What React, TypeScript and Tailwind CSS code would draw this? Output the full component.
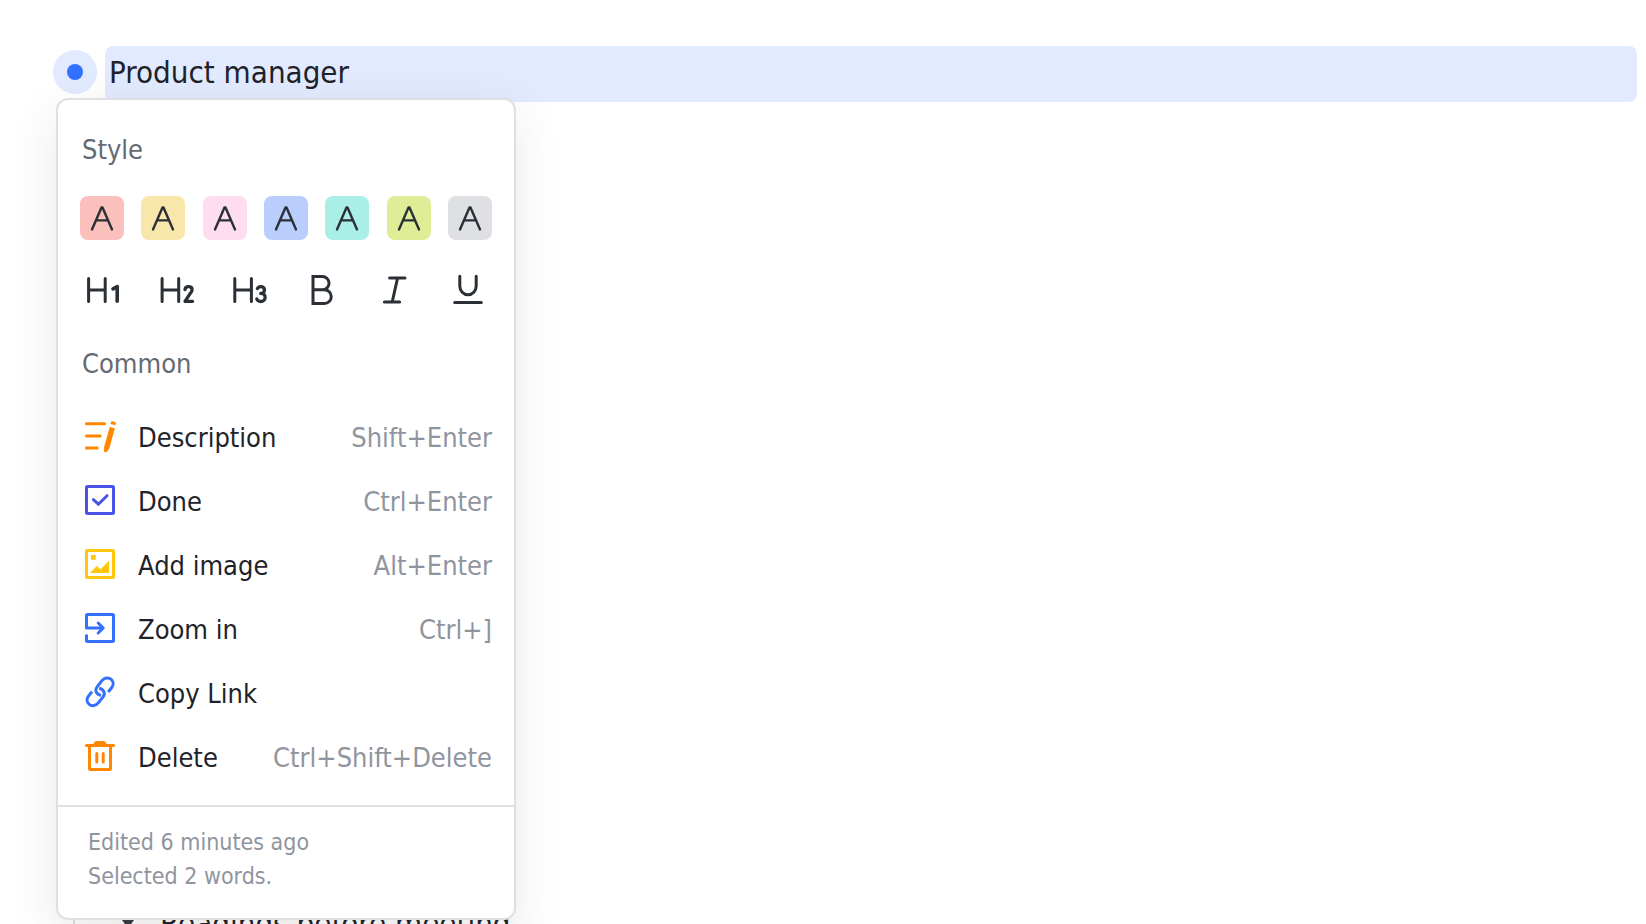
import React from 'react';

const swatches = [
  { name: 'Red', bg: 'bg-[#fbbfbc]' },
  { name: 'Yellow', bg: 'bg-[#f8e6ab]' },
  { name: 'Pink', bg: 'bg-[#fdddef]' },
  { name: 'Blue', bg: 'bg-[#bacefd]' },
  { name: 'Teal', bg: 'bg-[#a9efe6]' },
  { name: 'Green', bg: 'bg-[#dfee96]' },
  { name: 'Gray', bg: 'bg-[#dee0e3]' },
];

const formats = [
  {
    name: 'Heading 1',
    icon: (
      <>
        <path d="M8.6 10.4v23.2M25.2 10.4v23.2M8.6 22h16.6" />
        <path d="M33 20.9l4.2-2.2v14.6" strokeWidth="3.6" />
      </>
    ),
  },
  {
    name: 'Heading 2',
    icon: (
      <>
        <path d="M8.1 10.4v23.2M24.7 10.4v23.2M8.1 22h16.6" />
        <path d="M31 21.5c.3-1.9 1.7-2.8 3.5-2.8 2.1 0 3.6 1.2 3.6 3 0 1.4-.8 2.6-2 3.9L31 33.3h7.6" strokeWidth="3.3" />
      </>
    ),
  },
  {
    name: 'Heading 3',
    icon: (
      <>
        <path d="M7.8 10.4v23.2M24.4 10.4v23.2M7.8 22h16.6" />
        <path
          d="M30.4 20.6c.6-1.3 1.8-2 3.5-2 2 0 3.6 1.3 3.6 3.3s-1.6 3.5-3.8 3.5c2.6 0 4.4 1.5 4.4 4s-1.9 4.1-4.3 4.1c-2 0-3.5-.9-4-2.6"
          strokeWidth="3.3"
        />
      </>
    ),
  },
  {
    name: 'Bold',
    icon: <path d="M12 8.5h9.4a6.6 6.6 0 0 1 0 13.3H12zM12 21.8h11.4a6.8 6.8 0 0 1 0 13.7H12z" strokeLinejoin="miter" />,
  },
  { name: 'Italic', icon: <path d="M15.6 10h15.4M10.4 34h15.2M23.6 10l-5.4 24" /> },
  { name: 'Underline', icon: <path d="M11.8 8.3v9.7a8.2 8.8 0 0 0 16.4 0V8.3M6.7 34.6h26.6" /> },
];

const actions = [
  {
    label: 'Description',
    shortcut: 'Shift+Enter',
    color: 'text-[#ff8800]',
    icon: (
      <>
        <path d="M2.4 3.8h18.2M2.4 16h13.8M2.4 28h10.8" />
        <path
          d="M25.8 7l5 1.3-5.3 19.6-2.6 4c-.8.9-2.6.5-2.9-.7l.2-4.7zM28.2 1.2l2.9.7c.7.2 1 .8.8 1.4l-.5 2-4.9-1.2.5-2.1c.2-.6.7-.9 1.2-.8z"
          fill="currentColor"
          stroke="none"
        />
      </>
    ),
  },
  {
    label: 'Done',
    shortcut: 'Ctrl+Enter',
    color: 'text-[#4954e6]',
    icon: (
      <>
        <rect x="2.5" y="2.5" width="27" height="27" rx="1" />
        <path d="M9.4 15.6l5 4.6 8.6-8.5" strokeLinejoin="miter" />
      </>
    ),
  },
  {
    label: 'Add image',
    shortcut: 'Alt+Enter',
    color: 'text-[#ffc60a]',
    icon: (
      <>
        <rect x="2.5" y="2.5" width="27" height="27" rx="1" />
        <path d="M7 7h4.7v4.7H7zM6 25l6.8-7 3.8 3.3 8.4-8.5V25z" fill="currentColor" stroke="none" />
      </>
    ),
  },
  {
    label: 'Zoom in',
    shortcut: 'Ctrl+]',
    color: 'text-[#3370ff]',
    icon: (
      <>
        <path
          d="M2.5 16V3.5a1 1 0 0 1 1-1h25a1 1 0 0 1 1 1v25a1 1 0 0 1-1 1h-25a1 1 0 0 1-1-1v-6"
          strokeLinecap="butt"
        />
        <path d="M2.5 16h16M14.2 11l5 5-5 5" />
      </>
    ),
  },
  {
    label: 'Copy Link',
    color: 'text-[#3370ff]',
    icon: (
      <g strokeLinecap="butt">
        <path d="M17 19.4C12.4 18.4 10.4 14.4 13.1 10.8L17.7 4.9C20.2 1.7 24.3 1 27 3.2S29.8 9 27.4 12l-3.2 4" />
        <path
          d="M17 19.4C12.4 18.4 10.4 14.4 13.1 10.8L17.7 4.9C20.2 1.7 24.3 1 27 3.2S29.8 9 27.4 12l-3.2 4"
          transform="rotate(180 16.1 15.8)"
        />
      </g>
    ),
  },
  {
    label: 'Delete',
    shortcut: 'Ctrl+Shift+Delete',
    color: 'text-[#ff8800]',
    icon: (
      <>
        <path d="M2.4 5.4h27.2M5.5 5.4v23.1a1 1 0 0 0 1 1h19a1 1 0 0 0 1-1V5.4" />
        <path d="M9.6 5c0-2.6 1-4 3-4h6.8c2 0 3 1.4 3 4z" fill="currentColor" stroke="none" />
        <path d="M12.8 13.6v8.4M19.2 13.6v8.4" />
      </>
    ),
  },
];

const NodeMenu: React.FC = () => {
  return (
    <div className="absolute left-[56px] top-[98px] z-10 w-[460px] rounded-xl border-2 border-[#dee0e3] bg-white shadow-[0_16px_48px_rgba(31,35,41,0.1)]">
      <div className="px-[22px] pt-8 pb-[17px]">
        <h2 className="pl-0.5 text-[27px] leading-[36px] text-[#646a73]">Style</h2>
        <div className="mt-7 flex justify-between">
          {swatches.map((swatch) => (
            <button key={swatch.name} type="button" aria-label={swatch.name} className={`h-11 w-11 rounded-lg ${swatch.bg}`}>
              <svg viewBox="0 0 44 44" className="h-11 w-11" fill="none" stroke="#2b2f36" strokeWidth="2.4" strokeLinecap="round" strokeLinejoin="round">
                <path d="M12 33.4l9.5-22h1l9.5 22M15.8 24.4h12.4" />
              </svg>
            </button>
          ))}
        </div>
        <div className="mt-7 flex justify-between">
          {formats.map((format) => (
            <button key={format.name} type="button" aria-label={format.name} className="h-11 w-11">
              <svg viewBox="0 0 44 44" className="h-11 w-11" fill="none" stroke="#2b2f36" strokeWidth="3" strokeLinecap="round" strokeLinejoin="round">
                {format.icon}
              </svg>
            </button>
          ))}
        </div>

        <h2 className="mt-[34px] pl-0.5 text-[27px] leading-[36px] text-[#646a73]">Common</h2>
        <div className="mt-[22px] flex flex-col">
          {actions.map((action) => (
            <button key={action.label} type="button" className="flex h-16 items-center pl-1 text-[27px] leading-[36px]">
              <svg
                viewBox="0 0 32 32"
                className={`h-8 w-8 shrink-0 ${action.color}`}
                fill="none"
                stroke="currentColor"
                strokeWidth="3"
                strokeLinecap="round"
                strokeLinejoin="round"
              >
                {action.icon}
              </svg>
              <span className="ml-[22px] pt-1 text-[#1f2329]">{action.label}</span>
              {action.shortcut && <span className="ml-auto pt-1 text-[#8f959e]">{action.shortcut}</span>}
            </button>
          ))}
        </div>
      </div>
      <div className="border-t-2 border-[#dee0e3] pl-[30px] pt-[18px] pb-[25px] text-[23px] leading-[34px] text-[#8f959e]">
        <p>Edited 6 minutes ago</p>
        <p>Selected 2 words.</p>
      </div>
    </div>
  );
};

const App: React.FC = () => {
  return (
    <div className="relative h-screen overflow-hidden bg-white font-['DejaVu_Sans_Condensed',Tahoma,sans-serif] text-[#1f2329]">
      <div className="flex items-start gap-2 pl-[53px] pr-[9px] pt-[46px]">
        <button type="button" aria-label="Open node menu" className="mt-1 flex h-11 w-11 shrink-0 items-center justify-center rounded-full bg-[#e1eaff]">
          <span className="h-4 w-4 rounded-full bg-[#3370ff]"></span>
        </button>
        <p className="h-14 flex-1 rounded-lg bg-[#e1eaff] pl-1 text-[31px] leading-[52px]">Product manager</p>
      </div>

      <div className="ml-[73px] border-l-2 border-[#dee0e3] pt-[793px]">
        <div className="flex items-center pl-[46px]">
          <svg viewBox="0 0 14 12" className="h-3 w-3.5" fill="#373c43">
            <path d="M1.6 1h10.8c.9 0 1.4 1 .8 1.7l-5.4 7.6c-.4.6-1.2.6-1.6 0L.8 2.7C.2 2 .7 1 1.6 1z" />
          </svg>
          <p className="ml-[25px] text-[31px] leading-[56px]">Readings before meeting</p>
        </div>
      </div>

      <NodeMenu />
    </div>
  );
};

export default App;
